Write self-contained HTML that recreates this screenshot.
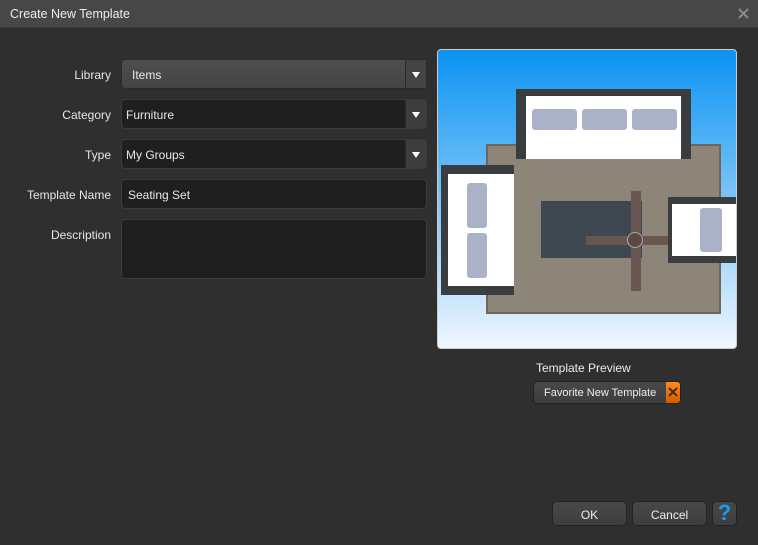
<!DOCTYPE html>
<html><head><style>
*{box-sizing:border-box;margin:0;padding:0}
body{width:758px;height:545px;background:#2f2f2f;font-family:"Liberation Sans",sans-serif;font-size:12px;color:#e8e8e8;position:relative;overflow:hidden}
.a{position:absolute}
.title{left:0;top:0;width:758px;height:28px;background:#474747;border-bottom:1px solid #3a3a3a}
.title span{position:absolute;left:10px;top:7px;font-size:12.5px;color:#eee}
.lbl{right:647px;text-align:right;font-size:12px;color:#e6e6e6}
.f{left:121px;width:306px;height:30px;background:#1f1f1f;border:1px solid #3c3c3c;border-radius:4px;padding:8px 4px}
.dd .arr{position:absolute;right:0;top:0;width:21px;height:28px;background:#3d3d3d;border-left:1px solid #2a2a2a}
.dd .arr:after{content:"";position:absolute;left:6px;top:12px;border-left:4px solid transparent;border-right:4px solid transparent;border-top:6px solid #fff}
.btn{background:linear-gradient(#484848,#3e3e3e);border:1px solid #232323;border-radius:5px;text-align:center;color:#eee}
</style></head><body>
<div class="a title"><span>Create New Template</span>
<svg class="a" style="left:738px;top:8px" width="11" height="11"><path d="M1 1L10 10M10 1L1 10" stroke="#8a8a8a" stroke-width="2"/></svg></div>

<div class="a lbl" style="top:68px">Library</div>
<div class="a f dd" style="top:59px;background:linear-gradient(#4e4e4e,#444);border-color:#2a2a2a;padding-left:10px">Items<div class="arr" style="background:#444"></div></div>
<div class="a lbl" style="top:108px">Category</div>
<div class="a f dd" style="top:99px">Furniture<div class="arr"></div></div>
<div class="a lbl" style="top:148px">Type</div>
<div class="a f dd" style="top:139px">My Groups<div class="arr"></div></div>
<div class="a lbl" style="top:188px">Template Name</div>
<div class="a f" style="top:179px;padding-left:6px">Seating Set</div>
<div class="a lbl" style="top:228px">Description</div>
<div class="a f" style="top:219px;height:60px"></div>

<div class="a" style="left:437px;top:49px;width:300px;height:300px;border-radius:4px;overflow:hidden;background:linear-gradient(#0a93f3,#7dc4f8 50%,#f0f7fe);border:1px solid #ccc">
 <div class="a" style="left:48px;top:94px;width:235px;height:170px;background:#8d8577;border:2px solid #6e665a"></div>
 <div class="a" style="left:78px;top:39px;width:175px;height:70px;background:#3a3d40"></div>
 <div class="a" style="left:88px;top:46px;width:155px;height:63px;background:#fff"></div>
 <div class="a" style="left:94px;top:59px;width:45px;height:21px;background:#aab2c8;border-radius:3px"></div>
 <div class="a" style="left:144px;top:59px;width:45px;height:21px;background:#aab2c8;border-radius:3px"></div>
 <div class="a" style="left:194px;top:59px;width:45px;height:21px;background:#aab2c8;border-radius:3px"></div>
 <div class="a" style="left:3px;top:115px;width:73px;height:130px;background:#3a3d40"></div>
 <div class="a" style="left:10px;top:124px;width:66px;height:112px;background:#fff"></div>
 <div class="a" style="left:29px;top:133px;width:20px;height:45px;background:#aab2c8;border-radius:3px"></div>
 <div class="a" style="left:29px;top:183px;width:20px;height:45px;background:#aab2c8;border-radius:3px"></div>
 <div class="a" style="left:103px;top:151px;width:101px;height:57px;background:#3e4850"></div>
 <div class="a" style="left:193px;top:141px;width:10px;height:100px;background:#6a5650"></div>
 <div class="a" style="left:148px;top:186px;width:100px;height:9px;background:#6a5650"></div>
 <div class="a" style="left:189px;top:182px;width:16px;height:16px;border-radius:50%;background:#5a4a44;border:1px solid #aaa"></div>
 <div class="a" style="left:230px;top:147px;width:70px;height:66px;background:#3a3d40"></div>
 <div class="a" style="left:234px;top:154px;width:66px;height:52px;background:#fff"></div>
 <div class="a" style="left:262px;top:158px;width:22px;height:44px;background:#aab2c8;border-radius:3px"></div>
</div>

<div class="a" style="left:536px;top:361px;font-size:12px;color:#eee">Template Preview</div>
<div class="a btn" style="left:533px;top:381px;width:148px;height:23px;border-radius:4px;padding-top:5px;text-align:left;padding-left:10px;font-size:11px">Favorite New Template
 <div class="a" style="right:0;top:0;width:14px;height:21px;background:linear-gradient(#ff8a20,#d45a00);border-radius:0 3px 3px 0"><svg width="14" height="21"><path d="M3 6L11 14M11 6L3 14" stroke="#4a2a10" stroke-width="2"/></svg></div></div>

<div class="a btn" style="left:552px;top:501px;width:75px;height:25px;padding-top:6px">OK</div>
<div class="a btn" style="left:632px;top:501px;width:75px;height:25px;padding-top:6px">Cancel</div>
<div class="a btn" style="left:712px;top:501px;width:25px;height:25px;font-size:22px;font-weight:bold;color:#1a9cf0;line-height:22px">?</div>
</body></html>
